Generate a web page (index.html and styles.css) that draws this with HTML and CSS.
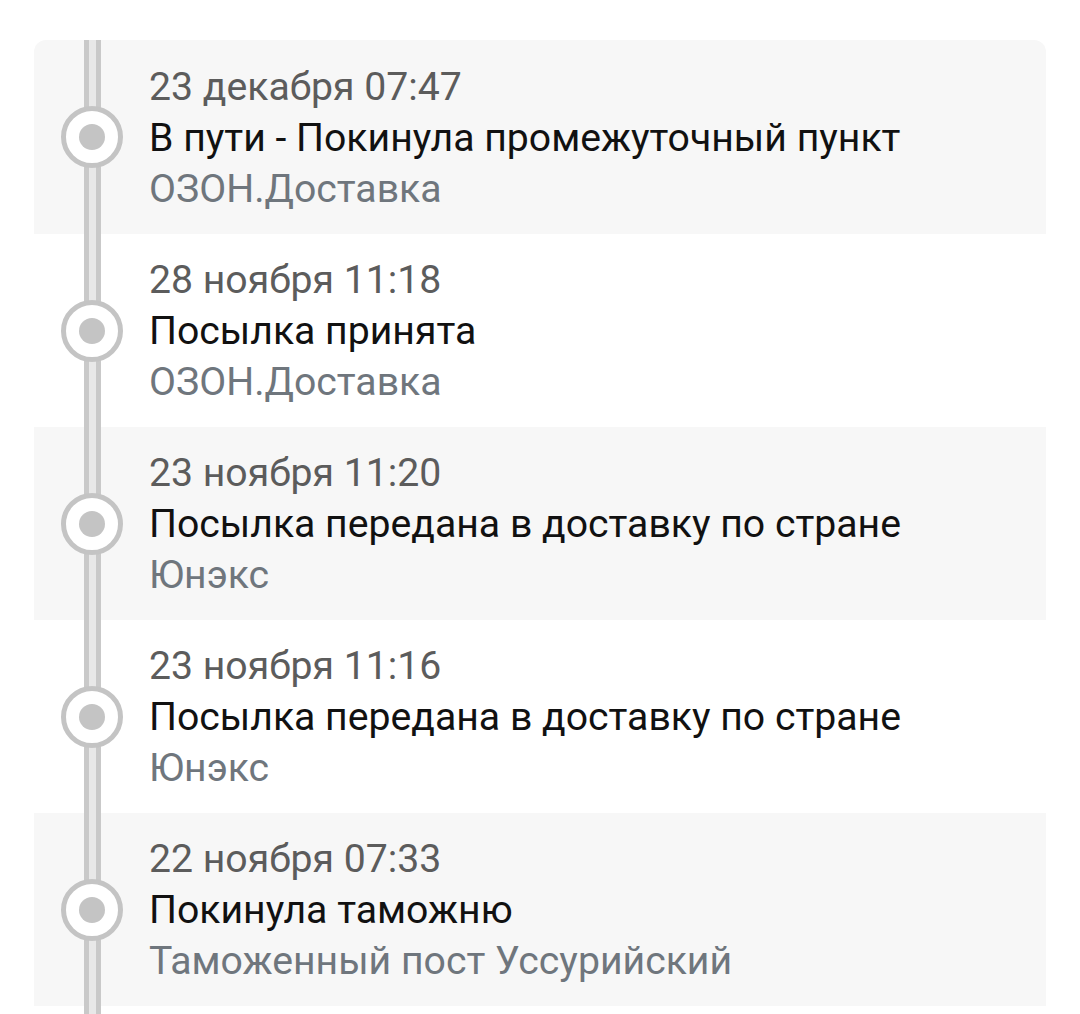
FILE: index.html
```html
<!DOCTYPE html>
<html lang="ru">
<head>
    <meta charset="UTF-8">
    <title>Отслеживание</title>
    <link rel="stylesheet" href="styles.css">
</head>
<body>
    <div class="card">
        <div class="row">
            <div class="marker"><span class="dot"></span></div>
            <div class="info">
                <div class="date">23 декабря 07:47</div>
                <div class="title">В пути - Покинула промежуточный пункт</div>
                <div class="place">ОЗОН.Доставка</div>
            </div>
        </div>
        <div class="row">
            <div class="marker"><span class="dot"></span></div>
            <div class="info">
                <div class="date">28 ноября 11:18</div>
                <div class="title">Посылка принята</div>
                <div class="place">ОЗОН.Доставка</div>
            </div>
        </div>
        <div class="row">
            <div class="marker"><span class="dot"></span></div>
            <div class="info">
                <div class="date">23 ноября 11:20</div>
                <div class="title">Посылка передана в доставку по стране</div>
                <div class="place">Юнэкс</div>
            </div>
        </div>
        <div class="row">
            <div class="marker"><span class="dot"></span></div>
            <div class="info">
                <div class="date">23 ноября 11:16</div>
                <div class="title">Посылка передана в доставку по стране</div>
                <div class="place">Юнэкс</div>
            </div>
        </div>
        <div class="row">
            <div class="marker"><span class="dot"></span></div>
            <div class="info">
                <div class="date">22 ноября 07:33</div>
                <div class="title">Покинула таможню</div>
                <div class="place">Таможенный пост Уссурийский</div>
            </div>
        </div>
        <div class="row tail">
            <div class="marker"></div>
        </div>
    </div>
</body>
</html>
```

FILE: styles.css
```css
*{
    margin: 0;
    padding: 0;
    box-sizing: border-box;
}
body{
    background: #fff;
    font-family: Roboto, "Noto Sans", "Liberation Sans", sans-serif;
}
.card{
    margin: 40px 34px 0;
    border-radius: 12px 12px 0 0;
    overflow: hidden;
}
.row{
    display: flex;
    height: 193px;
    background: #fff;
}
.row:first-child{
    height: 194px;
}
.row:nth-child(odd){
    background: #f7f7f7;
}
.row.tail{
    height: 40px;
    background: #fff;
}
.marker{
    position: relative;
    width: 115px;
    flex-shrink: 0;
    display: flex;
    align-items: center;
}
/* линия таймлайна */
.marker::before{
    content: "";
    position: absolute;
    top: 0;
    bottom: 0;
    left: 50px;
    width: 17px;
    background: linear-gradient(to right, #c9c9c9 0, #c9c9c9 5px, #e8e8e8 5px, #e8e8e8 12px, #c9c9c9 12px, #c9c9c9 17px);
}
.dot{
    position: relative;
    z-index: 1;
    width: 62px;
    height: 62px;
    margin-left: 27px;
    border: 5px solid #c4c4c4;
    border-radius: 50%;
    background: #fff;
    display: flex;
    align-items: center;
    justify-content: center;
}
.dot::after{
    content: "";
    width: 26px;
    height: 26px;
    border-radius: 50%;
    background: #c4c4c4;
}
.info{
    display: flex;
    flex-direction: column;
    justify-content: center;
    padding-top: 2px;
    font-size: 39.2px;
    line-height: 51px;
}
.date{
    color: #5c5c5c;
}
.title{
    color: #111;
}
.place{
    color: #6f767d;
}
```
